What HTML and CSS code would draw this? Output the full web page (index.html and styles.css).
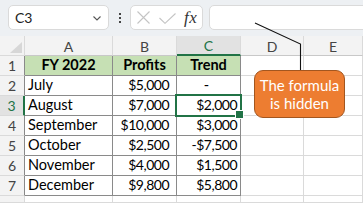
FILE: index.html
```
<!DOCTYPE html>
<html>
<head>
<meta charset="utf-8">
<link rel="stylesheet" href="styles.css">
</head>
<body>
<div class="topbar">
  <div class="namebox">
    <span class="ref">C3</span>
    <svg class="chev" width="8" height="5" viewBox="0 0 8 5"><path d="M0.5 0.5 L4 4 L7.5 0.5" fill="none" stroke="#555" stroke-width="1.1"/></svg>
  </div>
  <div class="dots"><i></i><i></i><i></i></div>
  <div class="fxbox">
    <svg class="ico" width="13" height="13" viewBox="0 0 13 13"><path d="M0.5 0.5 L12.5 12.5 M12.5 0.5 L0.5 12.5" stroke="#c4c4c4" stroke-width="1.1" fill="none"/></svg>
    <svg class="ico" width="17" height="11" viewBox="0 0 17 11"><path d="M0.5 5 L6 10.3 L16.5 0.5" stroke="#c4c4c4" stroke-width="1.1" fill="none"/></svg>
    <span class="fx">fx</span>
  </div>
  <div class="formula"></div>
</div>
<div class="sheet">
  <div class="corner"><span class="tri"></span></div>
  <div class="ch">A</div>
  <div class="ch">B</div>
  <div class="ch sel">C</div>
  <div class="ch">D</div>
  <div class="ch">E</div>

  <div class="rh">1</div>
  <div class="c d hd">FY 2022</div>
  <div class="c d hd">Profits</div>
  <div class="c d hd">Trend</div>
  <div class="c"></div><div class="c"></div>

  <div class="rh">2</div>
  <div class="c d">July</div>
  <div class="c d n acc">$5,000</div>
  <div class="c d ctr">-</div>
  <div class="c"></div><div class="c"></div>

  <div class="rh rsel">3</div>
  <div class="c d">August</div>
  <div class="c d n acc">$7,000</div>
  <div class="c d n active">$2,000</div>
  <div class="c"></div><div class="c"></div>

  <div class="rh">4</div>
  <div class="c d">September</div>
  <div class="c d n acc">$10,000</div>
  <div class="c d n">$3,000</div>
  <div class="c"></div><div class="c"></div>

  <div class="rh">5</div>
  <div class="c d">October</div>
  <div class="c d n acc">$2,500</div>
  <div class="c d n">-$7,500</div>
  <div class="c"></div><div class="c"></div>

  <div class="rh">6</div>
  <div class="c d">November</div>
  <div class="c d n acc">$4,000</div>
  <div class="c d n">$1,500</div>
  <div class="c"></div><div class="c"></div>

  <div class="rh">7</div>
  <div class="c d">December</div>
  <div class="c d n acc">$9,800</div>
  <div class="c d n">$5,800</div>
  <div class="c"></div><div class="c"></div>

  <div class="rh last"></div>
  <div class="c"></div><div class="c"></div><div class="c"></div><div class="c"></div><div class="c"></div>
</div>
<svg class="leader" width="363" height="203" viewBox="0 0 363 203"><polyline points="255,23 300.5,44 300.5,70" fill="none" stroke="#111" stroke-width="1.1"/></svg>
<div class="callout">The formula<br>is hidden</div>
</body>
</html>
```
FILE: styles.css
```
* { box-sizing: border-box; }
html, body { margin: 0; padding: 0; }
body {
  width: 363px;
  height: 203px;
  overflow: hidden;
  position: relative;
  background: #fff;
  font-family: Lato, "Open Sans", sans-serif;
  color: #000;
}
.topbar {
  height: 37px;
  background: #edf0f3;
  display: flex;
  align-items: flex-start;
  padding: 5px 0 0 8px;
  border-bottom: 1px solid #e2e2e2;
  overflow: hidden;
}
.namebox {
  width: 101px;
  height: 25px;
  background: #fff;
  border: 1px solid #dadada;
  border-radius: 5px;
  display: flex;
  align-items: center;
  justify-content: space-between;
  padding: 0 7px 0 6px;
}
.ref { font-size: 14px; color: #222; }
.chev { margin-top: 1px; }
.dots {
  width: 21px;
  height: 25px;
  display: flex;
  flex-direction: column;
  align-items: center;
  justify-content: center;
  gap: 2px;
}
.dots i { display: block; width: 2px; height: 2px; background: #444; }
.fxbox {
  width: 73px;
  height: 25px;
  background: #fff;
  border: 1px solid #dadada;
  border-radius: 5px;
  display: flex;
  align-items: center;
  padding: 0 0 0 6px;
}
.ico { display: block; }
.ico + .ico { margin-left: 9px; margin-top: 2px; }
.fx {
  font-family: "Liberation Serif", serif;
  font-style: italic;
  font-size: 17px;
  color: #333;
  margin-left: 8px;
  letter-spacing: 0.5px;
}
.formula {
  flex: 1;
  height: 25px;
  margin-left: 6px;
  margin-right: -10px;
  background: #fff;
  border: 1px solid #dadada;
  border-radius: 5px;
}
.sheet {
  display: grid;
  grid-template-columns: 25px 88px 64px 64px 63px 59px;
  grid-template-rows: repeat(8, 20px) 7px;
  margin-top: -1px;
  height: 167px;
  overflow: hidden;
}
.sheet > div {
  border-right: 1px solid #dadada;
  border-bottom: 1px solid #dadada;
}
.corner { background: #f3f3f3; position: relative; }
.tri {
  position: absolute;
  right: 2px;
  bottom: 2px;
  width: 0;
  height: 0;
  border-left: 12px solid transparent;
  border-bottom: 11px solid #d7d7d7;
}
.ch, .rh {
  background: #f3f3f3;
  color: #444;
  font-size: 14px;
  display: flex;
  align-items: center;
  justify-content: center;
}
.ch { border-bottom-color: #c8c8c8 !important; padding-top: 1px; }
.ch.sel {
  background: #e2e2e2;
  color: #217346;
  border-bottom: 2px solid #217346 !important;
}
.rh { border-right-color: #8a8a8a !important; }
.rh.last { border-right-color: #dadada !important; }
.rh.rsel {
  background: #e2e2e2;
  color: #217346;
  border-right: 2px solid #217346 !important;
}
.c {
  font-size: 14.5px;
  display: flex;
  align-items: flex-end;
  padding: 0 3px 2px 3px;
  white-space: nowrap;
}
.d {
  border-right-color: #8a8a8a !important;
  border-bottom-color: #8a8a8a !important;
}
.hd {
  background: #c6e0b4;
  font-weight: bold;
  justify-content: center;
}
.n { justify-content: flex-end; letter-spacing: -0.5px; font-size: 14px; }
.acc { padding-right: 7px; }
.ctr { justify-content: center; padding-right: 7px; }
.active { position: relative; }
.active::after {
  content: "";
  position: absolute;
  top: -2px;
  left: -2px;
  right: -2px;
  bottom: -2px;
  border: 2px solid #217346;
  z-index: 2;
}
.active::before {
  content: "";
  position: absolute;
  right: -4px;
  bottom: -4px;
  width: 7px;
  height: 7px;
  background: #217346;
  border: 1px solid #fff;
  z-index: 3;
}
.leader {
  position: absolute;
  left: 0;
  top: 0;
  pointer-events: none;
}
.callout {
  position: absolute;
  left: 254px;
  top: 70px;
  width: 91px;
  height: 48px;
  background: #ed7d31;
  border: 1px solid #a3561f;
  border-radius: 9px;
  color: #fff;
  font-size: 15px;
  line-height: 18px;
  text-align: center;
  display: flex;
  align-items: center;
  justify-content: center;
}
```
